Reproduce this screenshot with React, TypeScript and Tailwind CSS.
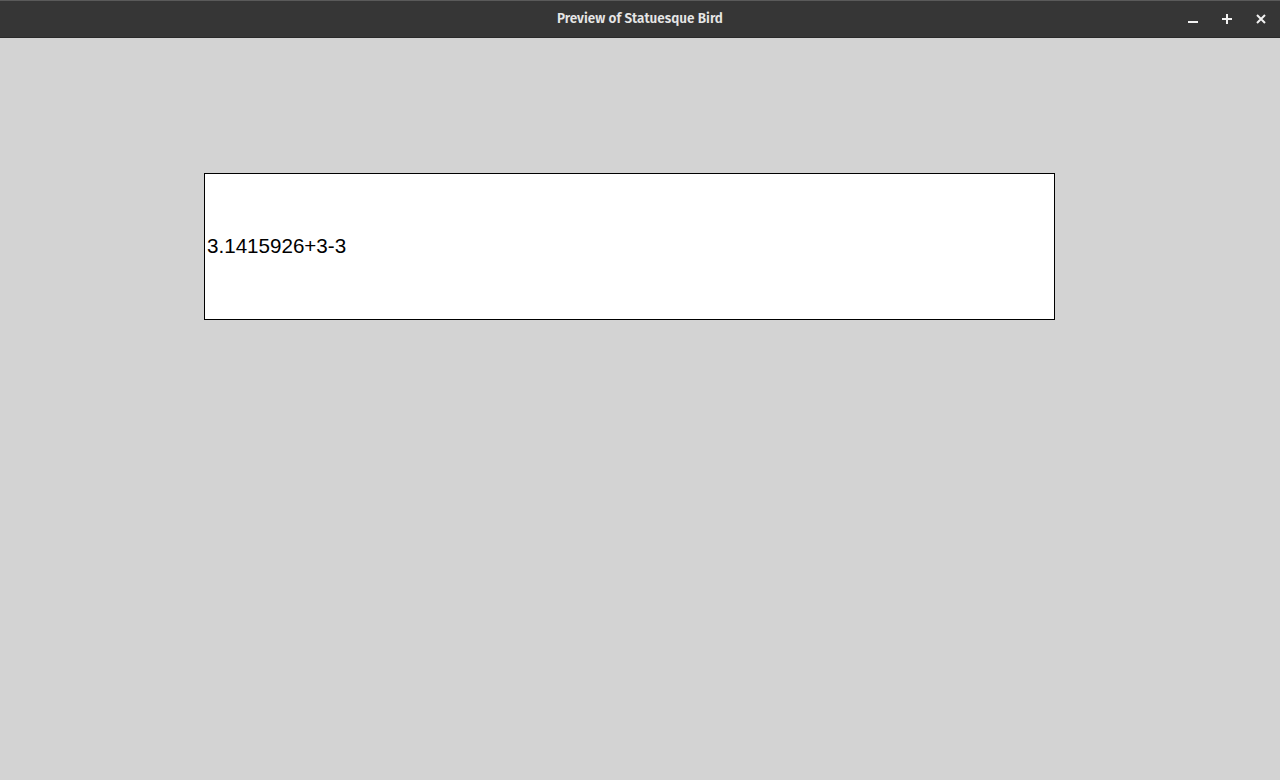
export default function App() {
  return (
    <div className="flex h-[780px] w-[1280px] flex-col overflow-hidden bg-[#d3d3d3]">
      <div className="h-px w-full bg-[#5a5a5a]" />
      <header className="relative flex h-[37px] items-center justify-center border-b border-[#2a2a2a] bg-[#363636]">
        <span className="font-['Fira_Sans','Noto_Sans',sans-serif] text-[13.5px] font-semibold text-[#e6e6e6]">
          Preview of Statuesque Bird
        </span>
        <div className="absolute right-[2px] top-0 flex h-full items-center">
          <button className="flex h-full w-[34px] items-center justify-center">
            <svg width="10" height="10" viewBox="0 0 10 10">
              <rect x="0" y="7" width="10" height="2" fill="#f2f2f2" />
            </svg>
          </button>
          <button className="flex h-full w-[34px] items-center justify-center">
            <svg width="10" height="10" viewBox="0 0 10 10">
              <rect x="0" y="4" width="10" height="2" fill="#f2f2f2" />
              <rect x="4" y="0" width="2" height="10" fill="#f2f2f2" />
            </svg>
          </button>
          <button className="flex h-full w-[34px] items-center justify-center">
            <svg width="10" height="10" viewBox="0 0 10 10">
              <path d="M1 1 L9 9 M9 1 L1 9" stroke="#f2f2f2" strokeWidth="2" />
            </svg>
          </button>
        </div>
      </header>
      <main className="flex-1 pl-[204px] pt-[135px]">
        <div className="flex h-[147px] w-[851px] items-center border border-black bg-white pl-[2px]">
          <span className="font-['Liberation_Sans',Arial,sans-serif] text-[20.6px] text-black">
            3.1415926+3-3
          </span>
        </div>
      </main>
    </div>
  );
}
